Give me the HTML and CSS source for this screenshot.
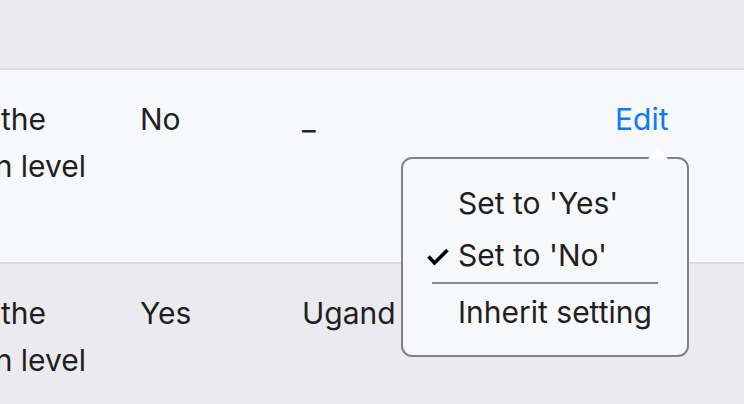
FILE: index.html
```html
<!DOCTYPE html>
<html lang="en">
<head>
<meta charset="utf-8">
<title>Settings</title>
<link rel="stylesheet" href="styles.css">
</head>
<body>
<div class="page">
  <div class="band"></div>
  <div class="table">
    <div class="row row-light">
      <div class="cell label-cell">
        <div class="label-line short"><span>Override the</span></div>
        <div class="label-line"><span>organisation level</span></div>
      </div>
      <div class="cell">No</div>
      <div class="cell">_</div>
      <div class="cell"><a class="edit" href="#">Edit</a></div>
    </div>
    <div class="row row-gray">
      <div class="cell label-cell">
        <div class="label-line short"><span>Override the</span></div>
        <div class="label-line"><span>organisation level</span></div>
      </div>
      <div class="cell">Yes</div>
      <div class="cell">Ugand</div>
      <div class="cell"></div>
    </div>
    <div class="menu">
      <div class="menu-item">Set to 'Yes'</div>
      <div class="menu-item checked">
        <svg class="check" viewBox="0 0 22 18" width="22" height="18" aria-hidden="true"><path d="M1.5 8.5 L7.5 15 L20.5 2" fill="none" stroke="#000" stroke-width="3.6" stroke-linejoin="miter"/></svg>
        Set to 'No'
      </div>
      <div class="menu-sep"></div>
      <div class="menu-item">Inherit setting</div>
    </div>
  </div>
</div>
</body>
</html>
```
FILE: styles.css
```css
* { box-sizing: border-box; }
html, body {
  margin: 0;
  padding: 0;
  background: #ebebef;
}
body {
  font-family: Inter, "Noto Sans", "Liberation Sans", sans-serif;
  font-size: 30px;
  color: #1f1f21;
  width: 744px;
  height: 404px;
  overflow: hidden;
}
.band {
  height: 70px;
  background: #ebebef;
  border-bottom: 2px solid #dcdce0;
}
.table {
  position: relative;
}
.row {
  display: grid;
  grid-template-columns: 140px 162px 313px 1fr;
  height: 194px;
  padding-top: 26px;
  line-height: 47px;
  border-bottom: 2px solid #dcdce0;
}
.row-light { background: #f7f8fb; }
.row-gray {
  background: #ebebef;
  border-bottom: none;
  height: 140px;
}
.cell { white-space: nowrap; }
.label-cell {
  width: 86px;
  overflow: hidden;
}
.label-line {
  display: flex;
  justify-content: flex-end;
  white-space: nowrap;
}
.label-line.short { padding-right: 40px; }
.edit {
  color: #0a7aff;
  text-decoration: none;
}
.menu {
  position: absolute;
  left: 401px;
  top: 87px;
  width: 288px;
  height: 200px;
  background: #f7f8fa;
  border: 2px solid #828282;
  border-radius: 11px;
  padding: 18px 29px 0 29px;
}
.menu::before {
  content: "";
  position: absolute;
  left: 245px;
  top: -11px;
  border-left: 10px solid transparent;
  border-right: 10px solid transparent;
  border-bottom: 11px solid #ffffff;
}
.menu-item {
  position: relative;
  line-height: 52px;
  padding-left: 26px;
  white-space: nowrap;
}
.check {
  position: absolute;
  left: -5px;
  top: 19px;
}
.menu-sep {
  height: 2px;
  background: #8a8a8a;
  margin: 1px 0 2px;
}
```
